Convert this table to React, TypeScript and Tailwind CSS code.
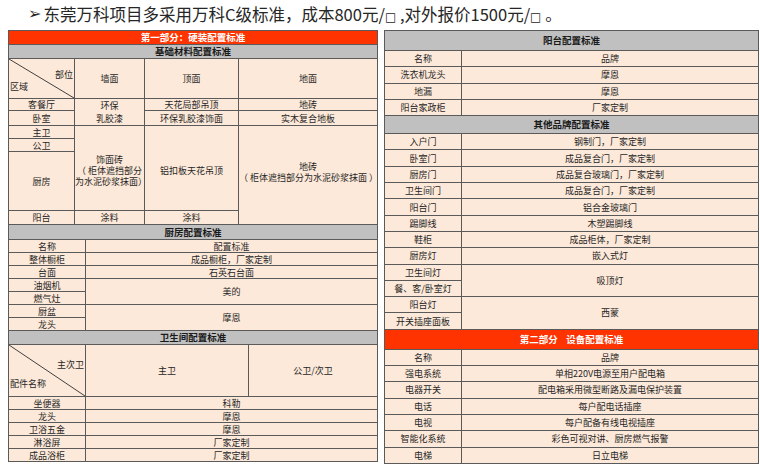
import React from 'react';

const FONT = { fontFamily: '"Noto Sans CJK SC", "Noto Sans", sans-serif' };

const base = 'border border-[#5a5a5a] bg-[#fde9d9] p-0 text-center align-middle text-[9px] text-[#262626]';
const td = `${base} leading-[11px]`;
const td13 = `${base} leading-[13px]`;
const tdWrap = `${base} leading-[11px] whitespace-nowrap`;
const grayBar = 'border border-[#5a5a5a] bg-[#c0c0c0] p-0 text-center align-middle leading-[11px] text-[9.5px] font-bold text-[#1a1a1a]';
const redBar = 'border border-[#5a5a5a] bg-[#ff3300] p-0 text-center align-middle leading-[11px] text-[9.5px] font-bold text-white';

function Diagonal({ top, bottom, h, topY, bottomY }: { top: string; bottom: string; h: string; topY: string; bottomY: string }) {
  return (
    <div className={`relative w-full ${h}`}>
      <svg className="absolute inset-0 h-full w-full" preserveAspectRatio="none" viewBox="0 0 100 100">
        <line x1="0" y1="0" x2="100" y2="100" stroke="#404040" strokeWidth="1" vectorEffect="non-scaling-stroke" />
      </svg>
      <span className={`absolute right-[1px] text-[9px] leading-none ${topY}`}>{top}</span>
      <span className={`absolute left-[1px] text-[9px] leading-none ${bottomY}`}>{bottom}</span>
    </div>
  );
}

function LeftColumn() {
  return (
    <div className="flex w-[370px] flex-col">
      <table className="w-full table-fixed border-collapse">
        <colgroup>
          <col className="w-[66px]" />
          <col className="w-[70px]" />
          <col className="w-[94px]" />
          <col />
        </colgroup>
        <tbody>
          <tr className="h-[14px]">
            <td colSpan={4} className={redBar}>第一部分：硬装配置标准</td>
          </tr>
          <tr className="h-[14px]">
            <td colSpan={4} className={grayBar}>基础材料配置标准</td>
          </tr>
          <tr className="h-[40px]">
            <td className={td}>
              <Diagonal h="h-[39px]" top="部位" bottom="区域" topY="top-[11px]" bottomY="top-[23px]" />
            </td>
            <td className={td}>墙面</td>
            <td className={td}>顶面</td>
            <td className={td}>地面</td>
          </tr>
          <tr className="h-[12px]">
            <td className={td}>客餐厅</td>
            <td rowSpan={2} className={td13}>
              环保
              <br />
              乳胶漆
            </td>
            <td className={td}>天花局部吊顶</td>
            <td className={td}>地砖</td>
          </tr>
          <tr className="h-[14px]">
            <td className={td}>卧室</td>
            <td className={td}>环保乳胶漆饰面</td>
            <td className={td}>实木复合地板</td>
          </tr>
          <tr className="h-[13px]">
            <td className={td}>主卫</td>
            <td rowSpan={3} className={`${tdWrap} pt-[4px]`}>
              饰面砖
              <br />（ 柜体遮挡部分
              <br />
              为水泥砂浆抹面）
            </td>
            <td rowSpan={3} className={`${td} pt-[4px]`}>铝扣板天花吊顶</td>
            <td rowSpan={4} className={`${tdWrap} pb-[6px]`}>
              地砖
              <br />（ 柜体遮挡部分为水泥砂浆抹面 ）
            </td>
          </tr>
          <tr className="h-[13px]">
            <td className={td}>公卫</td>
          </tr>
          <tr className="h-[59px]">
            <td className={td}>厨房</td>
          </tr>
          <tr className="h-[14px]">
            <td className={td}>阳台</td>
            <td className={td}>涂料</td>
            <td className={td}>涂料</td>
          </tr>
        </tbody>
      </table>

      <table className="-mt-px w-full table-fixed border-collapse">
        <colgroup>
          <col className="w-[77px]" />
          <col />
        </colgroup>
        <tbody>
          <tr className="h-[15px]">
            <td colSpan={2} className={grayBar}>厨房配置标准</td>
          </tr>
          <tr className="h-[13px]">
            <td className={td}>名称</td>
            <td className={td}>配置标准</td>
          </tr>
          <tr className="h-[13px]">
            <td className={td}>整体橱柜</td>
            <td className={td}>成品橱柜，厂家定制</td>
          </tr>
          <tr className="h-[13px]">
            <td className={td}>台面</td>
            <td className={td}>石英石台面</td>
          </tr>
          <tr className="h-[13px]">
            <td className={td}>油烟机</td>
            <td rowSpan={2} className={td}>美的</td>
          </tr>
          <tr className="h-[13px]">
            <td className={td}>燃气灶</td>
          </tr>
          <tr className="h-[13px]">
            <td className={td}>厨盆</td>
            <td rowSpan={2} className={td}>摩恩</td>
          </tr>
          <tr className="h-[13px]">
            <td className={td}>龙头</td>
          </tr>
        </tbody>
      </table>

      <table className="-mt-px w-full table-fixed border-collapse">
        <colgroup>
          <col className="w-[77px]" />
          <col className="w-[163px]" />
          <col />
        </colgroup>
        <tbody>
          <tr className="h-[14px]">
            <td colSpan={3} className={grayBar}>卫生间配置标准</td>
          </tr>
          <tr className="h-[52px]">
            <td className={td}>
              <Diagonal h="h-[51px]" top="主次卫" bottom="配件名称" topY="top-[15px]" bottomY="top-[34px]" />
            </td>
            <td className={td}>主卫</td>
            <td className={td}>公卫/次卫</td>
          </tr>
          {[
            ['坐便器', '科勒'],
            ['龙头', '摩恩'],
            ['卫浴五金', '摩恩'],
            ['淋浴屏', '厂家定制'],
            ['成品浴柜', '厂家定制'],
          ].map(([a, b]) => (
            <tr key={a} className="h-[13px]">
              <td className={td}>{a}</td>
              <td colSpan={2} className={td}>{b}</td>
            </tr>
          ))}
        </tbody>
      </table>
    </div>
  );
}

type Row = { kind: 'gray' | 'red'; text: string } | { kind: 'row'; a: string; b?: string; span?: number };

const rightRows: Row[] = [
  { kind: 'gray', text: '阳台配置标准' },
  { kind: 'row', a: '名称', b: '品牌' },
  { kind: 'row', a: '洗衣机龙头', b: '摩恩' },
  { kind: 'row', a: '地漏', b: '摩恩' },
  { kind: 'row', a: '阳台家政柜', b: '厂家定制' },
  { kind: 'gray', text: '其他品牌配置标准' },
  { kind: 'row', a: '入户门', b: '钢制门，厂家定制' },
  { kind: 'row', a: '卧室门', b: '成品复合门，厂家定制' },
  { kind: 'row', a: '厨房门', b: '成品复合玻璃门，厂家定制' },
  { kind: 'row', a: '卫生间门', b: '成品复合门，厂家定制' },
  { kind: 'row', a: '阳台门', b: '铝合金玻璃门' },
  { kind: 'row', a: '踢脚线', b: '木塑踢脚线' },
  { kind: 'row', a: '鞋柜', b: '成品柜体，厂家定制' },
  { kind: 'row', a: '厨房灯', b: '嵌入式灯' },
  { kind: 'row', a: '卫生间灯', b: '吸顶灯', span: 2 },
  { kind: 'row', a: '餐、客/卧室灯' },
  { kind: 'row', a: '阳台灯', b: '西蒙', span: 2 },
  { kind: 'row', a: '开关插座面板' },
  { kind: 'red', text: '第二部分    设备配置标准' },
  { kind: 'row', a: '名称', b: '品牌' },
  { kind: 'row', a: '强电系统', b: '单相220V电源至用户配电箱' },
  { kind: 'row', a: '电器开关', b: '配电箱采用微型断路及漏电保护装置' },
  { kind: 'row', a: '电话', b: '每户配电话插座' },
  { kind: 'row', a: '电视', b: '每户配备有线电视插座' },
  { kind: 'row', a: '智能化系统', b: '彩色可视对讲、厨房燃气报警' },
  { kind: 'row', a: '电梯', b: '日立电梯' },
];

function RightColumn() {
  return (
    <table className="w-[375px] table-fixed border-collapse self-start">
      <colgroup>
        <col className="w-[77px]" />
        <col />
      </colgroup>
      <tbody>
        {rightRows.map((r, i) => {
          if (r.kind === 'gray')
            return (
              <tr key={i} className={i === 0 ? 'h-[20px]' : 'h-[18px]'}>
                <td colSpan={2} className={grayBar}>{r.text}</td>
              </tr>
            );
          if (r.kind === 'red')
            return (
              <tr key={i} className="h-[20px]">
                <td colSpan={2} className={`${redBar} whitespace-pre`}>{r.text}</td>
              </tr>
            );
          return (
            <tr key={i} className="h-[16.3px]">
              <td className={td}>{r.a}</td>
              {r.b !== undefined && (
                <td rowSpan={r.span ?? 1} className={td}>
                  {r.b}
                </td>
              )}
            </tr>
          );
        })}
      </tbody>
    </table>
  );
}

const Tofu = () => <span className="font-['DejaVu_Sans'] text-[12px]">□</span>;

export default function App() {
  return (
    <div className="h-[465px] w-[760px] overflow-hidden bg-white" style={FONT}>
      <div className="flex h-[30px] items-start pl-[28px] pt-[3px] text-[16.5px] leading-[22px] text-[#262626]">
        <span className="mr-[2px] font-['DejaVu_Sans'] text-[16px]">➢</span>
        <span>
          东莞万科项目多采用万科C级标准，成本800元/<Tofu /> ,对外报价1500元/<Tofu /> 。
        </span>
      </div>
      <div className="flex gap-[6px] pl-[8px]">
        <LeftColumn />
        <RightColumn />
      </div>
    </div>
  );
}
